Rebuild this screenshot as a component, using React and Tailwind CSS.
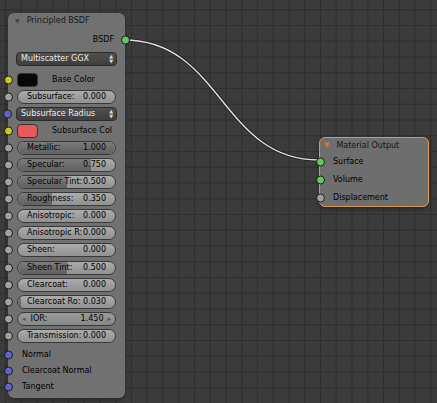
import React from 'react';

const font = "font-['DejaVu_Sans','Liberation_Sans',sans-serif]";

function Socket({ color, side = 'left' }) {
  return (
    <span
      className={`absolute top-1/2 -translate-y-1/2 w-[9px] h-[9px] rounded-full border border-[#1b1b1b] ${side === 'left' ? 'left-[-4.5px]' : 'right-[-4.5px]'} ${color}`}
    />
  );
}

function Slider({ label, value, frac }) {
  return (
    <div className="relative w-full h-[14px] rounded-full border border-[#383838] bg-[#a4a4a4] overflow-hidden">
      <div className="absolute inset-y-0 left-0 bg-[#6e6e6e]" style={{ width: `${frac * 100}%` }} />
      <div className="absolute inset-0 bg-gradient-to-b from-white/10 to-black/10" />
      <div className="relative flex items-center justify-between h-full pl-[9px] pr-[9px] text-black whitespace-nowrap">
        <span>{label}</span>
        <span>{value}</span>
      </div>
    </div>
  );
}

function NumField({ label, value }) {
  return (
    <div className="relative w-full h-[14px] rounded-full border border-[#383838] bg-gradient-to-b from-[#9a9a9a] to-[#888888] flex items-center text-black whitespace-nowrap px-[4px]">
      <span className="text-[#555] text-[7px] mr-[5px]">◂</span>
      <span>{label}</span>
      <span className="ml-auto">{value}</span>
      <span className="text-[#555] text-[7px] ml-[4px]">▸</span>
    </div>
  );
}

function Dropdown({ label }) {
  return (
    <div className="w-full h-[14px] rounded-[4px] border border-[#2c2c2c] bg-gradient-to-b from-[#505050] to-[#3e3e3e] flex items-center pl-[4px] pr-[3px] text-[#ececec]">
      <span>{label}</span>
      <span className="ml-auto flex flex-col items-center leading-none text-[5px] text-[#dcdcdc]">
        <span>▲</span>
        <span>▼</span>
      </span>
    </div>
  );
}

function Row({ h = 'h-[17.1px]', socket, children }) {
  return (
    <div className={`relative flex items-center ${h}`}>
      {socket && <Socket color={socket} />}
      <div className="flex-1 flex items-center pl-[9px] pr-[9px]">{children}</div>
    </div>
  );
}

const yellow = 'bg-[#c7c729]';
const gray = 'bg-[#a1a1a1]';
const purple = 'bg-[#6363c7]';
const green = 'bg-[#63c763]';

const sliders = [
  ['Metallic:', '1.000', 1],
  ['Specular:', '0.750', 0.75],
  ['Specular Tint:', '0.500', 0.5],
  ['Roughness:', '0.350', 0.35],
  ['Anisotropic:', '0.000', 0],
  ['Anisotropic R:', '0.000', 0],
  ['Sheen:', '0.000', 0],
  ['Sheen Tint:', '0.500', 0.5],
  ['Clearcoat:', '0.000', 0],
  ['Clearcoat Ro:', '0.030', 0.03],
];

function GridBg() {
  const v = [];
  const h = [];
  for (let i = 0; i < 30; i++) {
    const x = 5.5 + i * 15.75;
    const y = 9.75 + i * 15.75;
    v.push(<line key={'v' + i} x1={x} y1={0} x2={x} y2={403} />);
    h.push(<line key={'h' + i} x1={0} y1={y} x2={437} y2={y} />);
  }
  return (
    <svg className="absolute inset-0" width="437" height="403">
      <g stroke="#2f2f2f" strokeWidth="1">
        {v}
        {h}
      </g>
    </svg>
  );
}

function Link() {
  const d = 'M124 40 C 222 40, 221 160, 319 160';
  return (
    <svg className="absolute inset-0 pointer-events-none" width="437" height="403">
      <path d={d} fill="none" stroke="#222" strokeWidth="3.2" />
      <path d={d} fill="none" stroke="#e2e2e2" strokeWidth="1.4" />
    </svg>
  );
}

export default function App() {
  return (
    <div className={`relative w-[437px] h-[403px] overflow-hidden bg-[#3b3b3b] text-[8px] ${font}`}>
      <GridBg />
      <Link />

      {/* Principled BSDF */}
      <div className="absolute left-[8px] top-[13px] w-[117px] h-[385px] rounded-[6px] bg-[#717171] shadow-[0_2px_4px_rgba(0,0,0,0.35)]">
        <div className="flex items-center h-[15px] pl-[7px] text-[#161616]">
          <span className="text-[6px] text-[#444] mr-[7px]">▼</span>
          <span>Principled BSDF</span>
        </div>
        <div className="relative flex items-center justify-end h-[16px] mt-[4px] pr-[11px] text-black">
          BSDF
          <Socket color={green} side="right" />
        </div>
        <div className="flex items-center h-[16px] mt-[3px] pl-[8px] pr-[8px]">
          <Dropdown label="Multiscatter GGX" />
        </div>
        <div className="mt-[4px]">
          <Row socket={yellow}>
            <div className="w-[21px] h-[14px] rounded-[4px] border border-[#333] bg-[#080808]" />
            <span className="ml-[14px] text-black">Base Color</span>
          </Row>
          <Row socket={gray}>
            <Slider label="Subsurface:" value="0.000" frac={0} />
          </Row>
          <Row socket={purple} h="h-[17.1px] -mx-[1px]">
            <Dropdown label="Subsurface Radius" />
          </Row>
          <Row socket={yellow}>
            <div className="w-[21px] h-[14px] rounded-[4px] border border-[#333] bg-[#e85a5a]" />
            <span className="ml-[14px] text-black">Subsurface Col</span>
          </Row>
          {sliders.map(([l, v, f]) => (
            <Row key={l} socket={gray}>
              <Slider label={l} value={v} frac={f} />
            </Row>
          ))}
          <Row socket={gray}>
            <NumField label="IOR:" value="1.450" />
          </Row>
          <Row socket={gray}>
            <Slider label="Transmission:" value="0.000" frac={0} />
          </Row>
        </div>
        <div className="mt-[2px] text-black">
          {['Normal', 'Clearcoat Normal', 'Tangent'].map((t) => (
            <div key={t} className="relative flex items-center h-[16px] pl-[14px]">
              <Socket color={purple} />
              {t}
            </div>
          ))}
        </div>
      </div>

      {/* Material Output */}
      <div className="absolute left-[319px] top-[137px] w-[110px] h-[70px] rounded-[6px] border border-[#d9985a] bg-[#6e6e6e] shadow-[0_2px_4px_rgba(0,0,0,0.35)]">
        <div className="flex items-center h-[15px] pl-[4px] text-[#161616]">
          <span className="text-[7px] text-[#e07828] mr-[7px]">▼</span>
          <span>Material Output</span>
        </div>
        <div className="text-black">
          {[
            ['Surface', green],
            ['Volume', green],
            ['Displacement', gray],
          ].map(([t, c]) => (
            <div key={t} className="relative flex items-center h-[18px] pl-[13px]">
              <Socket color={c} />
              {t}
            </div>
          ))}
        </div>
      </div>
    </div>
  );
}
